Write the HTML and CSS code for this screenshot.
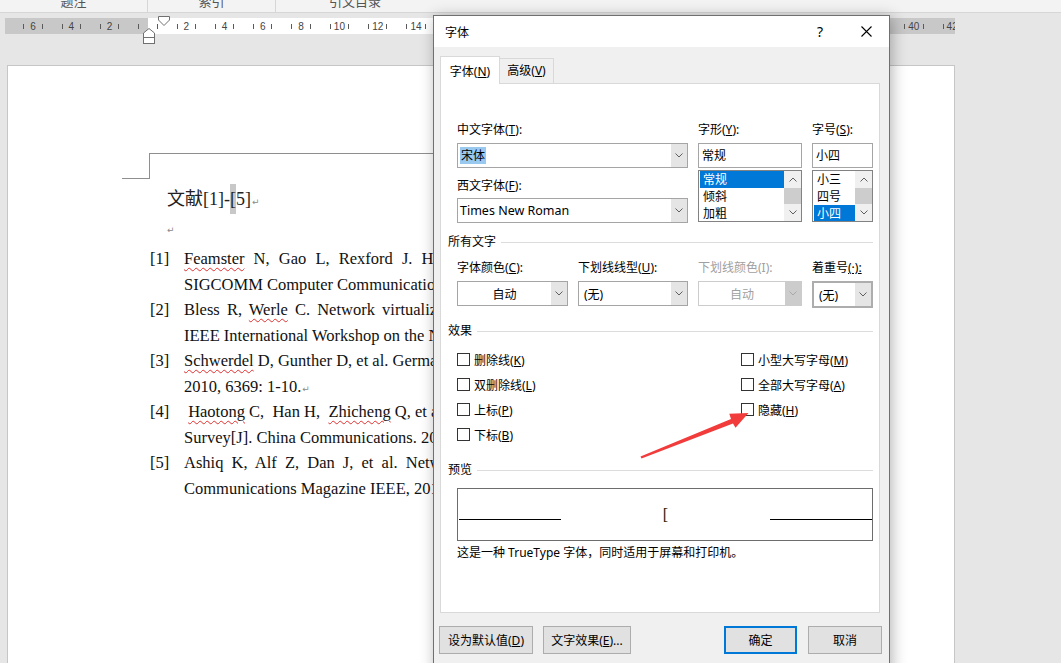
FILE: index.html
```html
<!DOCTYPE html>
<html lang="zh-CN">
<head>
  <meta charset="UTF-8">
  <title>字体</title>
  <link rel="stylesheet" href="styles.css">
</head>
<body>
  <svg class="defs" aria-hidden="true">
    <symbol id="chev-d" viewBox="0 0 8 5"><path d="M0.5 0.5 4 4 7.5 0.5" fill="none" stroke="currentColor"/></symbol>
    <symbol id="chev-u" viewBox="0 0 8 5"><path d="M0.5 4.5 4 1 7.5 4.5" fill="none" stroke="currentColor"/></symbol>
  </svg>

  <div class="ribbon">
    <div class="rib-group g1">题注</div>
    <div class="rib-group g2">索引</div>
    <div class="rib-group g3">引文目录</div>
  </div>

  <div class="ruler-wrap">
    <div class="ruler">
      <div class="ticks">
        <span class="cell"><i></i><b>8</b><i></i></span>
        <span class="cell"><i></i><b>6</b><i></i></span>
        <span class="cell"><i></i><b>4</b><i></i></span>
        <span class="cell"><i></i><b>2</b><i></i></span>
        <span class="cell"><i></i><b></b><i></i></span>
        <span class="cell"><i></i><b>2</b><i></i></span>
        <span class="cell"><i></i><b>4</b><i></i></span>
        <span class="cell"><i></i><b>6</b><i></i></span>
        <span class="cell"><i></i><b>8</b><i></i></span>
        <span class="cell"><i></i><b>10</b><i></i></span>
        <span class="cell"><i></i><b>12</b><i></i></span>
        <span class="cell"><i></i><b>14</b><i></i></span>
        <span class="cell"><i></i><b>16</b><i></i></span>
        <span class="cell"><i></i><b>18</b><i></i></span>
        <span class="cell"><i></i><b>20</b><i></i></span>
        <span class="cell"><i></i><b>22</b><i></i></span>
        <span class="cell"><i></i><b>24</b><i></i></span>
        <span class="cell"><i></i><b>26</b><i></i></span>
        <span class="cell"><i></i><b>28</b><i></i></span>
        <span class="cell"><i></i><b>30</b><i></i></span>
        <span class="cell"><i></i><b>32</b><i></i></span>
        <span class="cell"><i></i><b>34</b><i></i></span>
        <span class="cell"><i></i><b>36</b><i></i></span>
        <span class="cell"><i></i><b>38</b><i></i></span>
        <span class="cell"><i></i><b>40</b><i></i></span>
        <span class="cell"><i></i><b>42</b><i></i></span>
      </div>
    </div>
    <svg class="ind-top" width="12" height="10" viewBox="0 0 12 10"><path d="M0.5 0.5H11.5V4L6 9.5 0.5 4Z" fill="#fff" stroke="#707070"/></svg>
    <svg class="ind-bottom" width="12" height="16" viewBox="0 0 12 16"><path d="M0.5 9.5V5L6 0.5 11.5 5V9.5Z" fill="#fff" stroke="#707070"/><rect x="0.5" y="9.5" width="11" height="6" fill="#fff" stroke="#707070"/></svg>
  </div>

  <div class="page">
    <div class="corner"></div>
    <p class="heading">文献[1]-<span class="hl">[</span>5]<span class="pm">↵</span></p>
    <p class="blank"><span class="pm">↵</span></p>
    <div class="refs">
      <div class="ref">
        <span class="num">[1]</span>
        <div class="txt">
          <div class="ln ws1"><span class="sp">Feamster</span> N, Gao L, Rexford J. How to lease the Internet in your spare time[J]. ACM</div>
          <div class="ln">SIGCOMM Computer Communication Review, 2009, 39(1): 61-64.<span class="pm">↵</span></div>
        </div>
      </div>
      <div class="ref">
        <span class="num">[2]</span>
        <div class="txt">
          <div class="ln ws2">Bless R, <span class="sp">Werle</span> C. Network virtualization from a signaling perspective[C]//</div>
          <div class="ln">IEEE International Workshop on the Network of the Future. 2009: 1-5.<span class="pm">↵</span></div>
        </div>
      </div>
      <div class="ref">
        <span class="num">[3]</span>
        <div class="txt">
          <div class="ln"><span class="sp">Schwerdel</span> D, Gunther D, et al. German-Lab Experimental Facility[J]. Future Internet-FIS</div>
          <div class="ln">2010, 6369: 1-10.<span class="pm">↵</span></div>
        </div>
      </div>
      <div class="ref">
        <span class="num">[4]</span>
        <div class="txt">
          <div class="ln"> <span class="sp">Haotong</span> C,  Han H,  <span class="sp">Zhicheng</span> Q, et al. Network Virtualization Technology: A</div>
          <div class="ln">Survey[J]. China Communications. 2013, 10(4): 10-20.<span class="pm">↵</span></div>
        </div>
      </div>
      <div class="ref">
        <span class="num">[5]</span>
        <div class="txt">
          <div class="ln ws5">Ashiq K, Alf Z, Dan J, et al. Network virtualization: a hypervisor for the Internet?[J]. IEEE</div>
          <div class="ln">Communications Magazine IEEE, 2012, 50(1): 136-143.<span class="pm">↵</span></div>
        </div>
      </div>
    </div>
  </div>

  <div class="dialog">
    <div class="titlebar">
      <span class="title">字体</span>
      <span class="tb-btn help">?</span>
      <span class="tb-btn close"><svg width="11" height="11" viewBox="0 0 11 11"><path d="M0.5 0.5 10.5 10.5M10.5 0.5 0.5 10.5" stroke="#000" stroke-width="1.1"/></svg></span>
    </div>
    <div class="dlg-body">
      <div class="tabs">
        <div class="tab on">字体(<u>N</u>)</div>
        <div class="tab">高级(<u>V</u>)</div>
      </div>
      <div class="panel">
        <div class="font-grid">
          <label>中文字体(<u>T</u>):</label>
          <label>字形(<u>Y</u>):</label>
          <label>字号(<u>S</u>):</label>
          <div class="stack">
            <div class="combo"><span class="val"><span class="sel">宋体</span></span><span class="dd"><svg class="chev"><use href="#chev-d"/></svg></span></div>
            <label class="lbl2">西文字体(<u>F</u>):</label>
            <div class="combo"><span class="val latin">Times New Roman</span><span class="dd"><svg class="chev"><use href="#chev-d"/></svg></span></div>
          </div>
          <div class="stack">
            <div class="inp">常规</div>
            <div class="list">
              <div class="items">
                <div class="it on">常规</div>
                <div class="it">倾斜</div>
                <div class="it">加粗</div>
              </div>
              <div class="sb">
                <span class="arr"><svg class="chev"><use href="#chev-u"/></svg></span>
                <span class="thumb"></span>
                <span class="arr"><svg class="chev"><use href="#chev-d"/></svg></span>
              </div>
            </div>
          </div>
          <div class="stack">
            <div class="inp">小四</div>
            <div class="list">
              <div class="items">
                <div class="it">小三</div>
                <div class="it">四号</div>
                <div class="it on">小四</div>
              </div>
              <div class="sb">
                <span class="arr"><svg class="chev"><use href="#chev-u"/></svg></span>
                <span class="thumb"></span>
                <span class="arr"><svg class="chev"><use href="#chev-d"/></svg></span>
              </div>
            </div>
          </div>
        </div>

        <div class="grp g-all"><span>所有文字</span><i></i></div>
        <div class="color-grid">
          <label>字体颜色(<u>C</u>):</label>
          <label>下划线线型(<u>U</u>):</label>
          <label class="dis">下划线颜色(I):</label>
          <label>着重号<u>(·):</u></label>
          <div class="combo"><span class="val center">自动</span><span class="dd"><svg class="chev"><use href="#chev-d"/></svg></span></div>
          <div class="combo"><span class="val pad">(无)</span><span class="dd"><svg class="chev"><use href="#chev-d"/></svg></span></div>
          <div class="combo disabled"><span class="val center">自动</span><span class="dd"><svg class="chev"><use href="#chev-d"/></svg></span></div>
          <div class="combo strong"><span class="val pad">(无)</span><span class="dd"><svg class="chev"><use href="#chev-d"/></svg></span></div>
        </div>

        <div class="grp g-fx"><span>效果</span><i></i></div>
        <div class="effects">
          <div class="col">
            <div class="chk"><span class="box"></span><span>删除线(<u>K</u>)</span></div>
            <div class="chk"><span class="box"></span><span>双删除线(<u>L</u>)</span></div>
            <div class="chk"><span class="box"></span><span>上标(<u>P</u>)</span></div>
            <div class="chk"><span class="box"></span><span>下标(<u>B</u>)</span></div>
          </div>
          <div class="col">
            <div class="chk"><span class="box"></span><span>小型大写字母(<u>M</u>)</span></div>
            <div class="chk"><span class="box"></span><span>全部大写字母(<u>A</u>)</span></div>
            <div class="chk"><span class="box"></span><span>隐藏(<u>H</u>)</span></div>
          </div>
        </div>

        <div class="grp g-pv"><span>预览</span><i></i></div>
        <div class="preview">
          <span class="pv-line"></span>
          <span class="pv-text">[</span>
          <span class="pv-line"></span>
        </div>
        <p class="desc">这是一种 TrueType 字体，同时适用于屏幕和打印机。</p>
      </div>

      <div class="btn-row">
        <button class="btn w-def">设为默认值(<u>D</u>)</button>
        <button class="btn w-fx">文字效果(<u>E</u>)...</button>
        <button class="btn ok">确定</button>
        <button class="btn cancel">取消</button>
      </div>
    </div>
  </div>

  <svg class="arrow" width="1061" height="663" viewBox="0 0 1061 663">
    <polygon points="641.5,458.4 733,423.6 735.5,427.8 748.5,413 729.3,413.8 731,419 640.5,456.6" fill="#f23b3b"/>
  </svg>
</body>
</html>
```

FILE: styles.css
```css
* { margin: 0; padding: 0; box-sizing: border-box; }
body {
  width: 1061px;
  height: 663px;
  overflow: hidden;
  position: relative;
  background: #e6e6e6;
  font-family: "Noto Sans", "Noto Sans CJK SC", sans-serif;
}
.defs { position: absolute; width: 0; height: 0; }

/* word ribbon strip (cut at the top) */
.ribbon {
  display: flex;
  height: 13px;
  background: #f3f3f3;
  border-bottom: 1px solid #d6d6d6;
  overflow: hidden;
  font-family: "Noto Sans CJK SC", sans-serif;
  font-size: 13px;
  color: #555;
}
.rib-group {
  height: 17px;
  margin-top: -5px;
  line-height: 12px;
  text-align: center;
  border-right: 1px solid #d6d6d6;
}
.g1 { width: 148px; }
.g2 { width: 128px; }
.g3 { width: 158px; border-right: none; }

/* ruler */
.ruler-wrap { position: relative; height: 16px; margin-top: 5px; }
.ruler {
  margin-left: 5px;
  width: 950px;
  height: 16px;
  overflow: hidden;
  background: linear-gradient(to right, #c8c8c8 0 143px, #fff 143px 875px, #c8c8c8 875px);
}
.ticks { display: flex; margin-left: -29.4px; }
.cell {
  flex: 0 0 38.3px;
  height: 16px;
  display: flex;
  align-items: center;
  justify-content: space-between;
  padding: 0 9.5px;
}
.cell i { width: 1px; height: 5px; background: #5a5a5a; }
.cell b { font-family: "Liberation Sans", sans-serif; font-weight: normal; font-size: 10px; color: #444; }
.ind-top { position: absolute; left: 158px; top: -2px; }
.ind-bottom { position: absolute; left: 143px; top: 10px; }

/* document page */
.page {
  margin: 31px 0 0 7px;
  width: 948px;
  height: 640px;
  background: #fff;
  border: 1px solid #c6c6c6;
  border-bottom: none;
  font-family: "Liberation Serif", "Noto Sans CJK SC", serif;
  color: #111;
}
.corner {
  position: relative;
  margin: 87px 0 0 141px;
  width: 663px;
  height: 26px;
  border-top: 1px solid #8f8f8f;
  border-left: 1px solid #8f8f8f;
}
.corner::before {
  content: '';
  position: absolute;
  left: -28px;
  top: 24px;
  width: 27px;
  height: 1px;
  background: #8f8f8f;
}
.heading {
  margin: 8px 0 0 159px;
  height: 25px;
  font-size: 18px;
  line-height: 25px;
  color: #222;
}
.hl { background: #c8c8c8; padding: 5px 0; }
.pm { font-family: "DejaVu Sans", sans-serif; font-size: 9px; line-height: 0; color: #8a8a8a; margin-left: 1px; }
.blank { margin-left: 159px; height: 34px; padding-top: 10px; line-height: 12px; }
.blank .pm { margin-left: 0; line-height: 12px; }

.refs { margin-left: 142px; width: 662px; overflow: hidden; font-size: 16.5px; line-height: 25.5px; }
.ref { display: grid; grid-template-columns: 34px 1fr; }
.ln { height: 25.5px; white-space: pre; overflow: hidden; }
.ws1 { word-spacing: 5px; }
.ws2 { word-spacing: 3px; }
.ws5 { word-spacing: 4px; }
.sp { text-decoration: underline wavy #e0302f; text-decoration-thickness: 1px; text-underline-offset: 3px; }

/* dialog window */
.dialog {
  position: absolute;
  left: 433px;
  top: 15px;
  width: 457px;
  height: 660px;
  background: #f0f0f0;
  border: 1px solid #707070;
  box-shadow: 2px 2px 14px rgba(0, 0, 0, 0.3);
  font-size: 12px;
  color: #000;
  z-index: 2;
}
.titlebar {
  display: flex;
  align-items: center;
  height: 31px;
  background: #fff;
  padding-left: 11px;
}
.title { flex: 1; font-family: "Noto Sans CJK SC", sans-serif; font-size: 12px; }
.tb-btn { width: 46px; height: 31px; display: flex; align-items: center; justify-content: center; }
.help { font-size: 14px; }

.dlg-body { padding: 9px 0 0 6px; }
.tabs { display: flex; align-items: flex-end; height: 27px; }
.tab {
  width: 54px;
  height: 25px;
  line-height: 24px;
  text-align: center;
  border: 1px solid #d9d9d9;
  border-left: none;
  border-bottom: none;
  background: #f0f0f0;
}
.tab.on {
  width: 60px;
  height: 28px;
  line-height: 29px;
  background: #fff;
  border-left: 1px solid #d9d9d9;
  margin-bottom: -1px;
  position: relative;
  z-index: 1;
}
.panel {
  width: 440px;
  height: 530px;
  background: #fff;
  border: 1px solid #d9d9d9;
  padding: 38px 6px 0 7px;
}
label { display: block; line-height: 16px; }
label.dis { color: #a0a0a0; }

.font-grid {
  display: grid;
  grid-template-columns: 231px 104px 61px;
  column-gap: 10px;
  row-gap: 5px;
  margin-left: 9px;
}
.lbl2 { margin: 10px 0 4px; }
.combo {
  display: flex;
  height: 25px;
  border: 1px solid #a5a5a5;
  background: #fff;
}
.combo .val { flex: 1; display: flex; align-items: center; padding-left: 2px; white-space: nowrap; overflow: hidden; }
.combo .val.center { justify-content: center; padding-left: 0; }
.combo .val.pad { padding-left: 5px; }
.sel { background: #99c9ef; line-height: 17px; padding: 0 1px; }
.latin { font-size: 12.5px; }
.dd { width: 16px; display: flex; align-items: center; justify-content: center; background: #e5e5e5; }
.chev { width: 8px; height: 5px; color: #5f5f5f; }
.combo.disabled { border-color: #cccccc; color: #a0a0a0; }
.combo.disabled .dd { background: #cccccc; }
.combo.disabled .chev { color: #a8a8a8; }
.combo.strong { height: 27px; border: 2px solid #adadad; }

.inp {
  height: 25px;
  border: 1px solid #a5a5a5;
  padding-left: 3px;
  line-height: 23px;
}
.list {
  display: flex;
  height: 52px;
  margin-top: 2px;
  border: 1px solid #828282;
  overflow: hidden;
}
.items { flex: 1; padding-left: 1px; }
.it { height: 17px; line-height: 17px; padding-left: 3px; }
.it.on { background: #0078d7; color: #fff; }
.sb { width: 17px; display: flex; flex-direction: column; background: #f0f0f0; }
.arr { height: 17px; display: flex; align-items: center; justify-content: center; }
.thumb { height: 16px; background: #cdcdcd; }

.grp { display: flex; align-items: center; gap: 5px; line-height: 16px; }
.grp i { flex: 1; height: 1px; background: #dcdcdc; }
.g-all { margin-top: 11px; }
.g-fx { margin-top: 15px; }
.g-pv { margin-top: 15px; }

.color-grid {
  display: grid;
  grid-template-columns: 111px 110px 104px 61px;
  column-gap: 10px;
  row-gap: 5px;
  align-items: start;
  margin: 10px 0 0 9px;
}

.effects { display: grid; grid-template-columns: 284px 1fr; margin: 8px 0 0 9px; }
.chk { display: flex; align-items: center; gap: 4px; height: 25px; }
.box { width: 13px; height: 13px; border: 1px solid #333; background: #fff; }

.preview {
  display: flex;
  justify-content: space-between;
  align-items: flex-end;
  margin: 10px 0 0 9px;
  width: 416px;
  height: 53px;
  border: 1px solid #6d6d6d;
  padding: 0 0 20px 1px;
}
.pv-line { width: 102px; height: 1px; background: #000; }
.pv-text { font-family: "Liberation Serif", serif; font-size: 16px; line-height: 16px; margin-bottom: -3px; color: #2a1a00; }
.desc { margin: 4px 0 0 9px; line-height: 16px; }

.btn-row { display: flex; margin: 13px 7px 0 -1px; }
.btn {
  height: 28px;
  border: 1px solid #adadad;
  background: #e1e1e1;
  font: inherit;
  color: #000;
}
.w-def { width: 94px; }
.w-fx { width: 88px; margin-left: 10px; }
.ok { width: 73px; margin-left: auto; border: 2px solid #0078d7; }
.cancel { width: 74px; margin-left: 11px; }

.arrow { position: absolute; left: 0; top: 0; z-index: 3; pointer-events: none; }
```
